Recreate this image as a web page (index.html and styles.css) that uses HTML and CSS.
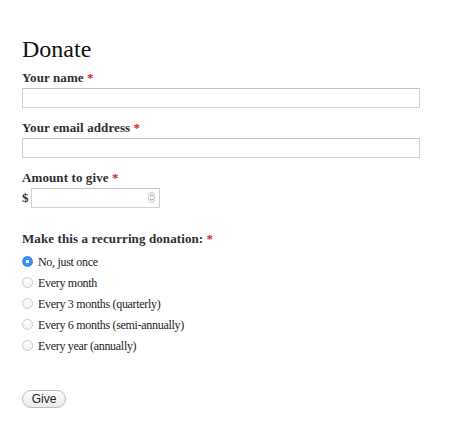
FILE: index.html
```html
<!DOCTYPE html>
<html lang="en">
<head>
    <meta charset="UTF-8">
    <meta name="viewport" content="width=device-width, initial-scale=1.0">
    <title>Donate</title>
    <link rel="stylesheet" href="styles.css">
</head>
<body>
    <form class="donate-form">
        <h1>Donate</h1>

        <div class="form-item">
            <label for="name">Your name <span class="required">*</span></label>
            <input type="text" id="name" class="text-input">
        </div>

        <div class="form-item">
            <label for="email">Your email address <span class="required">*</span></label>
            <input type="text" id="email" class="text-input">
        </div>

        <div class="form-item">
            <label for="amount">Amount to give <span class="required">*</span></label>
            <div class="amount-row">
                <span class="currency">$</span>
                <div class="number-wrap">
                    <input type="text" id="amount" class="number-input">
                    <span class="spinner">
                        <svg width="7" height="11" viewBox="0 0 7 11">
                            <rect x="0.5" y="0.5" width="6" height="10" rx="3" fill="#fafafa" stroke="#c9c9c9"/>
                            <path d="M2 4.2 L3.5 2.7 L5 4.2" fill="none" stroke="#777" stroke-width="0.9"/>
                            <path d="M2 6.8 L3.5 8.3 L5 6.8" fill="none" stroke="#777" stroke-width="0.9"/>
                        </svg>
                    </span>
                </div>
            </div>
        </div>

        <div class="form-item recurring">
            <div class="group-label">Make this a recurring donation: <span class="required">*</span></div>
            <label class="option"><input type="radio" name="recur" checked> No, just once</label>
            <label class="option"><input type="radio" name="recur"> Every month</label>
            <label class="option"><input type="radio" name="recur"> Every 3 months (quarterly)</label>
            <label class="option"><input type="radio" name="recur"> Every 6 months (semi-annually)</label>
            <label class="option"><input type="radio" name="recur"> Every year (annually)</label>
        </div>

        <button type="button" class="give-btn">Give</button>
    </form>
</body>
</html>
```

FILE: styles.css
```css
body {
    margin: 0;
    padding: 35px 22px 20px 22px;
    background: #fff;
    color: #222;
    font-family: "Liberation Serif", Georgia, serif;
    font-size: 13px;
}

h1 {
    margin: 0 0 7px 0;
    font-size: 24px;
    line-height: 28px;
    font-weight: normal;
    color: #111;
}

.form-item {
    margin-bottom: 12px;
}

.form-item label,
.group-label {
    display: block;
    font-weight: bold;
    line-height: 16px;
    letter-spacing: 0.1px;
    margin-bottom: 2px;
    color: #2e2e2e;
}

.required {
    color: #cc1f1f;
}

.text-input {
    display: block;
    box-sizing: border-box;
    width: 398px;
    height: 20px;
    margin: 0;
    border: 1px solid #d0d0d0;
    border-top-color: #c4c4c4;
    background: #fff;
}

.amount-row {
    display: flex;
    align-items: center;
    gap: 3px;
}

.currency {
    font-weight: bold;
    width: 6px;
    line-height: 16px;
    color: #2e2e2e;
}

.number-wrap {
    position: relative;
}

.number-input {
    display: block;
    box-sizing: border-box;
    width: 129px;
    height: 20px;
    margin: 0;
    border: 1px solid #d0d0d0;
    border-top-color: #c4c4c4;
}

.spinner {
    position: absolute;
    right: 5px;
    top: 4px;
    line-height: 0;
}

.recurring {
    margin-top: 23px;
    margin-bottom: 0;
}

.recurring .group-label {
    margin-bottom: 4px;
}

.form-item .option {
    display: flex;
    align-items: center;
    gap: 5px;
    height: 21px;
    margin: 0;
    font-size: 12px;
    font-weight: normal;
    letter-spacing: -0.3px;
    color: #222;
}

.option input {
    appearance: none;
    -webkit-appearance: none;
    box-sizing: border-box;
    width: 11px;
    height: 11px;
    margin: 0;
    border-radius: 50%;
    border: 1px solid #cacaca;
    background: linear-gradient(#fff, #f2f2f2);
}

.option input:checked {
    border-color: #2f86f5;
    background: radial-gradient(circle, #fff 0 1.6px, #3592fb 2px);
}

.give-btn {
    display: block;
    margin-top: 34px;
    box-sizing: border-box;
    width: 44px;
    height: 18px;
    padding: 0;
    border: 1px solid #bdbdbd;
    border-radius: 9px;
    background: linear-gradient(#fdfdfd, #ebebeb);
    font-family: "Liberation Sans", Arial, sans-serif;
    font-size: 12px;
    color: #222;
}
```
